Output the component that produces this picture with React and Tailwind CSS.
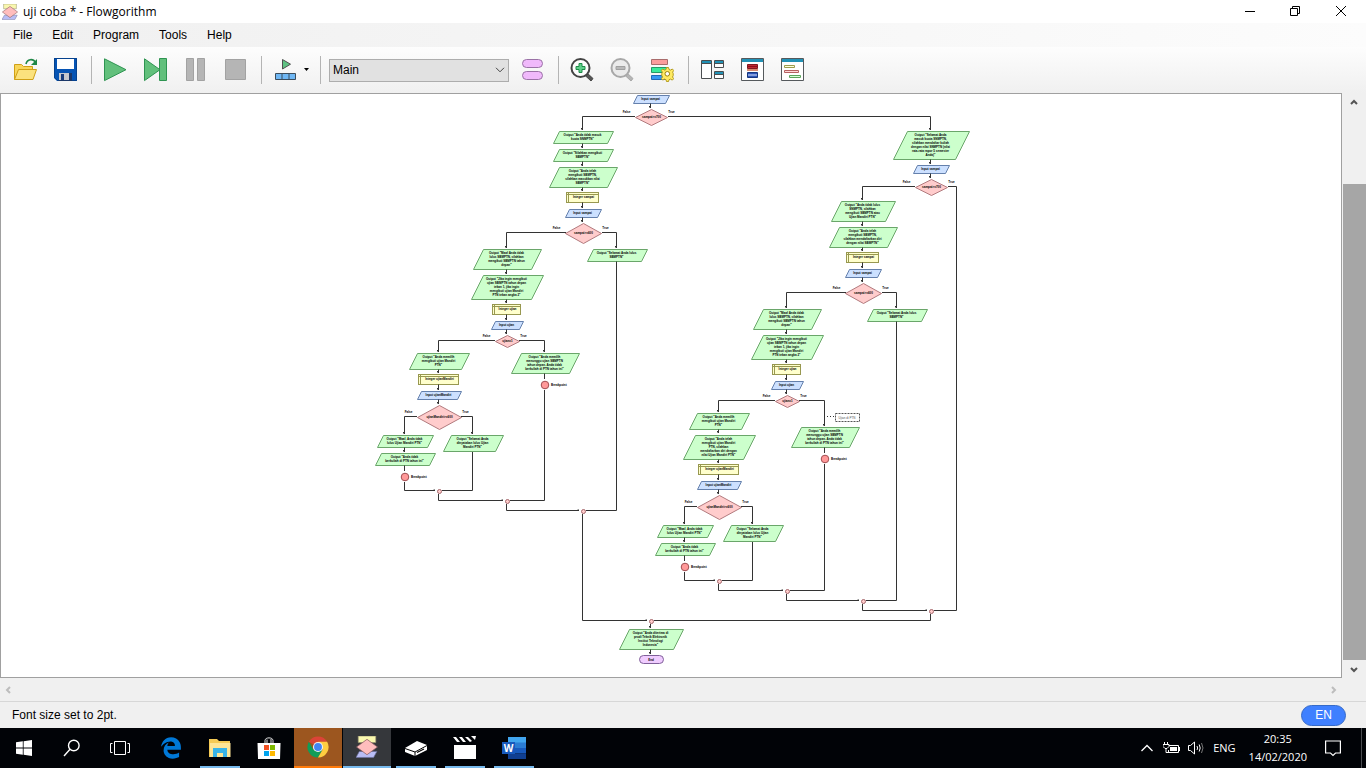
import React from "react";
import { FaEdgeLegacy } from "react-icons/fa";

/* ---------- Flowchart primitives ---------- */

const LINE = "#333333";

function Lines({ x, top, lines, fill = "#000000" }) {
  return (
    <text textAnchor="middle" fill={fill}>
      {lines.map((t, i) => (
        <tspan key={i} x={x} y={top + 4.5 + i * 4}>
          {t}
        </tspan>
      ))}
    </text>
  );
}

function Slanted({ x1, x2, y, h, lines, fill, stroke }) {
  const s = h / 2;
  return (
    <g>
      <polygon
        points={`${x1 + s},${y} ${x2},${y} ${x2 - s},${y + h} ${x1},${y + h}`}
        fill={fill}
        stroke={stroke}
      />
      <Lines x={(x1 + x2) / 2 - 1} top={y} lines={lines} />
    </g>
  );
}

const Output = ({ x1, x2, y, lines }) => (
  <Slanted x1={x1} x2={x2} y={y} h={lines.length * 4 + 4} lines={lines} fill="#ccffcc" stroke="#6aa66a" />
);

const Input = ({ x1, x2, y, name }) => (
  <Slanted x1={x1} x2={x2} y={y} h={8} lines={["Input " + name]} fill="#cce0ff" stroke="#6480ac" />
);

function Declare({ x, w, y, name }) {
  return (
    <g>
      <rect x={x} y={y} width={w} height="10" fill="#ffffcc" stroke="#989850" />
      <path d={`M${x + 2} ${y}v10M${x} ${y + 2}h${w}`} stroke="#989850" fill="none" />
      <Lines x={x + w / 2 + 1} top={y + 1} lines={["Integer " + name]} />
    </g>
  );
}

function Decision({ x, y, w, h, text }) {
  return (
    <g>
      <polygon points={`${x},${y - h} ${x + w},${y} ${x},${y + h} ${x - w},${y}`} fill="#ffcccc" stroke="#b27a7e" />
      <Lines x={x} top={y - 4} lines={[text]} />
      <text x={x - w - 9} y={y - 4.5} textAnchor="middle" fill="#000000">False</text>
      <text x={x + w + 4} y={y - 4.5} textAnchor="middle" fill="#000000">True</text>
    </g>
  );
}

function Wire({ d }) {
  return <path d={d} fill="none" stroke={LINE} />;
}

function Down({ x, y1, y2 }) {
  return (
    <g>
      <Wire d={`M${x} ${y1}V${y2}`} />
      <path d={`M${x - 1.5} ${y2 - 2}h2v1.5h-2z`} fill={LINE} />
    </g>
  );
}

function Join({ x, y }) {
  return (
    <g>
      <path d={`M${x - 6} ${y - 2}h1.500v1.500h-1.500z`} fill={LINE} />
      <circle cx={x} cy={y} r="2" fill="#ffcccc" stroke="#a5686c" />
    </g>
  );
}

function Breakpoint({ x, y }) {
  return (
    <g>
      <circle cx={x} cy={y} r="3.8" fill="#ff9999" stroke="#a04c50" />
      <text x={x + 6} y={y + 1} fill="#000000">Breakpoint</text>
    </g>
  );
}

/* Question about the independent entrance exam: the last nested decision. */
function IndependentExam() {
  return (
    <g>
      <Declare x={418.5} w={40} y={374.5} name="ujianMandiri" />
      <Down x={438.5} y1={384.5} y2={390} />
      <Input x1={417.5} x2={461.5} y={391.5} name="ujianMandiri" />
      <Down x={438.5} y1={399.5} y2={404} />
      <Decision x={439.5} y={417.5} w={22} h={12} text="ujianMandiri>=600" />
      <Wire d="M417 416.5H404.5V433M461 416.5H472.5V433" />
      <Down x={404.5} y1={430} y2={434} />
      <Down x={472.5} y1={430} y2={434} />
      <Output x1={377.5} x2={433.5} y={435.5} lines={['Output "Maaf, Anda tidak', 'lulus Ujian Mandiri PTN"']} />
      <Down x={404.5} y1={447.5} y2={452} />
      <Output x1={375.5} x2={435.5} y={453.5} lines={['Output "Anda tidak', 'berkuliah di PTN tahun ini"']} />
      <Wire d="M404.5 465.5V471M404.5 482V490.5H435M472.5 451.5V490.5H442" />
      <Output x1={443.5} x2={503.5} y={435.5} lines={['Output "Selamat Anda', "dinyatakan lulus Ujian", 'Mandiri PTN"']} />
      <Breakpoint x={405} y={477} />
      <Join x={439.5} y={491.5} />
      <Wire d="M438.5 494V500.5H503" />
    </g>
  );
}

/* Question about sitting another exam, shared by both halves of the chart. */
function ExamQuestion() {
  return (
    <g>
      <Wire d="M566 232.5H506.5V247M602 232.5H616.5V247" />
      <Down x={506.5} y1={244} y2={248} />
      <Down x={616.5} y1={244} y2={248} />
      <Output x1={473.5} x2={541.5} y={249.5} lines={['Output "Maaf Anda tidak', "lulus SBMPTN, silahkan", "mengikuti SBMPTN tahun", 'depan"']} />
      <Down x={506.5} y1={269.5} y2={274} />
      <Output x1={471.5} x2={543.5} y={275.5} lines={['Output "Jika ingin mengikuti', "ujian SBMPTN tahun depan", "tekan 1, jika ingin", "mengikuti ujian Mandiri", 'PTN tekan angka 2"']} />
      <Down x={506.5} y1={299.5} y2={303} />
      <Declare x={492.5} w={28} y={304.5} name="ujian" />
      <Down x={506.5} y1={314.5} y2={320} />
      <Input x1={491.5} x2={523.5} y={321.5} name="ujian" />
      <Down x={506.5} y1={329.5} y2={334} />
      <Decision x={507.5} y={341.5} w={12} h={6} text="ujian=1" />
      <Wire d="M495 340.5H438.5V351M519 340.5H544.5V351" />
      <Down x={438.5} y1={348} y2={352} />
      <Output x1={409.5} x2={469.5} y={353.5} lines={['Output "Anda memilih', "mengikuti ujian Mandiri", 'PTN"']} />
      <Down x={438.5} y1={369.5} y2={373} />
      <Output x1={587.5} x2={647.5} y={249.5} lines={['Output "Selamat Anda lulus', 'SBMPTN"']} />
    </g>
  );
}

const retake = ['Output "Anda memilih', "menunggu ujian SBMPTN", "tahun depan. Anda tidak", 'berkuliah di PTN tahun ini"'];

function Flowchart() {
  return (
    <svg
      viewBox="1 94 1340 583"
      className="block h-full w-full font-['Liberation_Sans',Arial,sans-serif] text-[3px] font-bold"
      role="img"
      aria-label="Flowchart"
    >
      <Input x1={633.5} x2={669.5} y={95.5} name="sampai" />
      <Down x={650.5} y1={103.5} y2={108} />
      <Decision x={651.5} y={117.5} w={16} h={8} text="sampai>=700" />
      <Wire d="M635 116.5H582.5V130M668 116.5H930.5V130" />
      <Down x={582.5} y1={126} y2={130} />
      <Down x={930.5} y1={126} y2={130} />

      <Output x1={553.5} x2={613.5} y={131.5} lines={['Output "Anda tidak masuk', 'kuota SNMPTN"']} />
      <Down x={582.5} y1={143.5} y2={148} />
      <Output x1={553.5} x2={613.5} y={149.5} lines={['Output "Silahkan mengikuti', 'SBMPTN"']} />
      <Down x={582.5} y1={161.5} y2={166} />
      <Output x1={549.5} x2={617.5} y={167.5} lines={['Output "Anda telah', "mengikuti SBMPTN,", "silahkan masukkan nilai", 'SBMPTN"']} />
      <Down x={582.5} y1={187.5} y2={191} />
      <Declare x={566.5} w={32} y={192.5} name="sampai" />
      <Down x={582.5} y1={202.5} y2={208} />
      <Input x1={565.5} x2={601.5} y={209.5} name="sampai" />
      <Down x={582.5} y1={217.5} y2={222} />
      <Decision x={583.5} y={233.5} w={18} h={10} text="sampai>=600" />
      <ExamQuestion />
      <IndependentExam />
      <Output x1={511.5} x2={579.5} y={353.5} lines={retake} />
      <Down x={544.5} y1={348} y2={352} />
      <Wire d="M544.5 373.5V379M544.5 390V500.5H510" />
      <Breakpoint x={545} y={385} />
      <Wire d="M506.5 504V510.5H579M616.5 261.5V510.5H586M582.5 514V620.5H647" />
      <Join x={507.5} y={501.5} />
      <Join x={583.5} y={511.5} />

      <Output
        x1={893.5}
        x2={969.5}
        y={131.5}
        lines={['Output "Selamat Anda', "masuk kuota SNMPTN,", "silahkan mendaftar kuliah", "dengan nilai SNMPTN (nilai", "rata-rata rapor 5 semester", 'Anda)"']}
      />
      <Down x={930.5} y1={159.5} y2={164} />
      <Input x1={913.5} x2={949.5} y={165.5} name="sampai" />
      <Down x={930.5} y1={173.5} y2={178} />
      <Decision x={931.5} y={187.5} w={16} h={8} text="sampai>=700" />
      <Wire d="M915 186.5H862.5V200M948 186.5H956.5V610.5H934" />
      <Down x={862.5} y1={196} y2={200} />
      <Output x1={831.5} x2={895.5} y={201.5} lines={['Output "Anda tidak lulus', "SNMPTN, silahkan", "mengikuti SBMPTN atau", 'Ujian Mandiri PTN"']} />
      <Down x={862.5} y1={221.5} y2={226} />
      <Output x1={829.5} x2={897.5} y={227.5} lines={['Output "Anda telah', "mengikuti SBMPTN,", "silahkan mendaftarkan diri", 'dengan nilai SBMPTN"']} />
      <Down x={862.5} y1={247.5} y2={251} />
      <Declare x={846.5} w={32} y={252.5} name="sampai" />
      <Down x={862.5} y1={262.5} y2={268} />
      <Input x1={845.5} x2={881.5} y={269.5} name="sampai" />
      <Down x={862.5} y1={277.5} y2={282} />
      <Decision x={863.5} y={293.5} w={18} h={10} text="sampai>=600" />
      <g transform="translate(280 60)">
        <ExamQuestion />
      </g>
      <Output x1={683.5} x2={755.5} y={435.5} lines={['Output "Anda telah', "mengikuti ujian Mandiri", "PTN, silahkan", "mendaftarkan diri dengan", 'nilai Ujian Mandiri PTN"']} />
      <Down x={718.5} y1={459.5} y2={463} />
      <g transform="translate(280 90)">
        <IndependentExam />
      </g>
      <path d="M827 416.5h8" stroke={LINE} strokeDasharray="1 2" />
      <rect x="835.5" y="413.5" width="24" height="8" fill="#ffffff" stroke="#555555" strokeDasharray="2 1" />
      <text x="847" y="418.5" textAnchor="middle" fill="#555555" className="font-normal">Ujian di PTN</text>
      <Down x={824.5} y1={409} y2={426} />
      <Output x1={791.5} x2={859.5} y={427.5} lines={retake} />
      <Wire d="M824.5 447.5V453M824.5 464V590.5H790" />
      <Breakpoint x={825} y={459} />
      <Wire d="M786.5 594V600.5H859M896.5 321.5V600.5H866M862.5 604V610.5H927M930.5 614V620.5H654" />
      <Join x={787.5} y={591.5} />
      <Join x={863.5} y={601.5} />
      <Join x={931.5} y={611.5} />

      <Join x={651.5} y={621.5} />
      <Down x={650.5} y1={624} y2={628} />
      <Output x1={619.5} x2={683.5} y={629.5} lines={['Output "Anda diterima di', "prodi Teknik Elektronik", "Institut Teknologi", 'Indonesia"']} />
      <Down x={650.5} y1={649.5} y2={654} />
      <rect x="639.5" y="655.5" width="24" height="8" rx="4" fill="#f0ccff" stroke="#80609a" />
      <text x="651" y="660.5" textAnchor="middle" fill="#000000">End</text>
    </svg>
  );
}

/* ---------- Icons ---------- */

function AppLogo({ className }) {
  return (
    <svg viewBox="0 0 20 20" className={className}>
      <path d="M2 0h16v6H2z" fill="#f9f7ae" stroke="#8f8b6a" strokeWidth=".6" />
      <path d="M3 14h16l-3 5.500H0z" fill="#b9bdf5" stroke="#6a6e9a" strokeWidth=".6" />
      <path d="M10 3L19.500 10 10 17 .5 10z" fill="#ffbdbd" stroke="#8b5f63" strokeWidth=".7" />
    </svg>
  );
}

const Icon = ({ children }) => (
  <svg viewBox="0 0 24 24" className="h-6 w-6 shrink-0" fill="none">
    {children}
  </svg>
);

const icons = {
  open: (
    <Icon>
      <path d="M1.500 21.500v-15h7l2 2h9v4" fill="#f8d65a" stroke="#d0a016" />
      <path d="M1.500 21.500l4-10h18l-3.500 10z" fill="#fbe27e" stroke="#d0a016" />
      <path d="M13 6c1-5 7-6 9.500-1.500" stroke="#208848" strokeWidth="1.600" />
      <path d="M24 1v6h-6z" fill="#208848" />
    </Icon>
  ),
  save: (
    <Icon>
      <path d="M1 0h23v23H4l-3-3z" fill="#0654b4" />
      <path d="M1.500.5h22v22H4.500l-3-3z" stroke="#06428e" />
      <path d="M4 1h17v10H4z" fill="#fff" />
      <path d="M6 15h13v8H6z" fill="#1b3768" />
      <path d="M6 15h10v7H6z" fill="#c6c9ce" />
      <path d="M8 16h3v6H8z" fill="#173c7c" />
    </Icon>
  ),
  play: (
    <Icon>
      <path d="M1.500.8v21.800L23 11.700z" fill="#62c07c" stroke="#2e9451" />
    </Icon>
  ),
  step: (
    <Icon>
      <path d="M1.500.8v21.800L17 11.700z" fill="#62c07c" stroke="#2e9451" />
      <path d="M16.500.5h7v22h-7z" fill="#62c07c" stroke="#2e9451" />
    </Icon>
  ),
  pause: (
    <Icon>
      <path d="M3.500.5h7v22h-7zM14.500.5h7v22h-7z" fill="#b5b5b5" stroke="#a2a2a2" />
    </Icon>
  ),
  stop: (
    <Icon>
      <path d="M2.500 1.500h20v20h-20z" fill="#b5b5b5" stroke="#a2a2a2" />
    </Icon>
  ),
  layout: (
    <Icon>
      <path d="M9.500 1.500v9.500l8-4.800z" fill="#5fc283" stroke="#505050" />
      <path d="M2.500 15.500h20v6h-20z" fill="#6fb7f4" stroke="#3c4d5c" />
      <path d="M9 15v7M16 15v7" stroke="#3c4d5c" />
    </Icon>
  ),
  functions: (
    <Icon>
      <rect x="2.500" y="1.500" width="20" height="8" rx="4" fill="#f0b9fb" stroke="#9a72a6" />
      <rect x="2.500" y="13.500" width="20" height="8" rx="4" fill="#f0b9fb" stroke="#9a72a6" />
    </Icon>
  ),
  zoomIn: (
    <Icon>
      <path d="M16 14l7 6.500-2 2.500-7.500-7z" fill="#555" stroke="#444" />
      <circle cx="10.500" cy="10" r="9" fill="#fdfdfd" stroke="#444" strokeWidth="2" />
      <path d="M9 5.500h3v3h3v3h-3v3H9v-3H6v-3h3z" fill="#5fd08a" stroke="#1e8a48" />
    </Icon>
  ),
  zoomOut: (
    <Icon>
      <path d="M16 14l7 6.500-2 2.500-7.500-7z" fill="#b5b5b5" stroke="#a8a8a8" />
      <circle cx="10.500" cy="10" r="9" fill="#ebebeb" stroke="#a8a8a8" strokeWidth="2" />
      <path d="M6 8.500h9v3H6z" fill="#b8b8b8" stroke="#a0a0a0" />
    </Icon>
  ),
  colors: (
    <Icon>
      <path d="M1.500 1.500h16v5h-16z" fill="#fb9c9c" stroke="#a96c6c" />
      <path d="M1.500 9.500h16v5h-16z" fill="#38eb9b" stroke="#279866" />
      <path d="M1.500 17.500h16v4h-16z" fill="#3498f2" stroke="#1f68b4" />
      <path
        d="M16.500 9.500h2l.5 2 1.500.6 1.800-1.100 1.400 1.400-1.100 1.800.6 1.300v2l-.7 1.500 1.200 1.700-1.400 1.400-1.800-1-1.500.6-.5 1.900h-2l-.5-1.900-1.500-.6-1.800 1-1.400-1.400 1.200-1.700-.7-1.500v-2l.6-1.300-1.100-1.800 1.400-1.400 1.800 1.100 1.500-.6z"
        fill="#ffea62"
        stroke="#b39a1c"
      />
      <circle cx="17.300" cy="15.800" r="2.300" fill="#fff" stroke="#9a8310" />
    </Icon>
  ),
  windows: (
    <Icon>
      <path d="M1.500 2.500h10v18h-10zM14.500 2.500h9v7h-9zM14.500 13.500h9v7h-9z" fill="#fff" stroke="#4a4e50" />
      <path d="M2 3h9v2H2zM15 3h8v2h-8zM15 14h8v2h-8z" fill="#2291b5" />
      <path d="M2 5.500h9M15 5.500h8M15 16.500h8" stroke="#4a4e50" />
    </Icon>
  ),
  source: (
    <Icon>
      <path d="M1.500.5h22v22h-22z" fill="#fff" stroke="#55595c" />
      <path d="M2 1h21v3H2z" fill="#2291b5" />
      <path d="M7.500 6.500h10v4h-10z" fill="#c02832" stroke="#801820" />
      <path d="M7 12h11" stroke="#d88c70" strokeWidth="2" />
      <path d="M7.500 14.500h10v5h-10z" fill="#2c55b8" stroke="#193880" />
      <path d="M8 17h9" stroke="#dce6ff" />
      <path d="M8 8.500h9" stroke="#8c1019" />
    </Icon>
  ),
  console: (
    <Icon>
      <path d="M1.500.5h22v22h-22z" fill="#fff" stroke="#55595c" />
      <path d="M2 1h21v3H2z" fill="#2291b5" />
      <path d="M4.500 7.500h10v2h-10z" fill="#ffffdc" stroke="#9c9c4c" />
      <path d="M4.500 12.500h14v2h-14z" fill="#ffd7d7" stroke="#b56060" />
      <path d="M9.500 17.500h11v2h-11z" fill="#d7ffd7" stroke="#5aa25a" />
    </Icon>
  ),
};

function Tool({ icon, label, disabled }) {
  return (
    <button type="button" aria-label={label} disabled={disabled} className="flex h-10 w-10 shrink-0 items-center justify-center">
      {icons[icon]}
    </button>
  );
}

const Separator = () => (
  <div className="flex h-7 w-[10px] shrink-0 justify-center pl-[3px]">
    <div className="w-px bg-[#b4b4b4]" />
  </div>
);

/* ---------- Window parts ---------- */

function TitleBar() {
  return (
    <header className="flex h-[23px] shrink-0 items-center bg-white pl-[2px] font-['Noto_Sans','Open_Sans',sans-serif] text-xs text-black">
      <AppLogo className="h-4 w-4" />
      <h1 className="ml-[5px] flex-1 font-['Open_Sans',sans-serif]">uji coba * - Flowgorithm</h1>
      <button type="button" aria-label="Minimize" className="flex w-[45px] justify-center">
        <svg viewBox="0 0 12 12" className="h-3 w-3"><path d="M1 5.500h10" stroke="#000" /></svg>
      </button>
      <button type="button" aria-label="Restore" className="flex w-[46px] justify-center">
        <svg viewBox="0 0 12 12" className="h-3 w-3" fill="none" stroke="#000"><path d="M1.500 2.500h7v7h-7zM3.500 2.500v-2h7v7h-2" /></svg>
      </button>
      <button type="button" aria-label="Close" className="flex w-[46px] justify-center">
        <svg viewBox="0 0 12 12" className="h-3 w-3" stroke="#000"><path d="M1 0l10 10M11 0L1 10" /></svg>
      </button>
      <div className="w-[2px]" />
    </header>
  );
}

function MenuBar() {
  return (
    <nav className="flex h-6 shrink-0 items-center bg-gradient-to-r from-[#f0f0f0] to-[#fcfcfc] pl-[3px]">
      {["File", "Edit", "Program", "Tools", "Help"].map((m) => (
        <button key={m} type="button" className="px-[10px]">
          {m}
        </button>
      ))}
    </nav>
  );
}

function ToolBar() {
  return (
    <div className="flex h-[46px] shrink-0 items-center bg-gradient-to-b from-[#fdfdfd] to-[#f0f0f0] pl-[5px]">
      <Tool icon="open" label="Open" />
      <Tool icon="save" label="Save" />
      <Separator />
      <Tool icon="play" label="Run" />
      <Tool icon="step" label="Step" />
      <Tool icon="pause" label="Pause" disabled />
      <Tool icon="stop" label="Stop" disabled />
      <Separator />
      <button type="button" aria-label="Window layout" className="flex h-10 w-[49px] shrink-0 items-center gap-[6px] pl-2">
        {icons.layout}
        <svg viewBox="0 0 7 4" className="h-1 w-[7px] shrink-0"><path d="M1 0h5L3.500 3z" fill="#000" /></svg>
      </button>
      <Separator />
      <div className="relative ml-[5px] mr-[3px] w-[180px] shrink-0">
        <select aria-label="Function" className="block h-[23px] w-full appearance-none border border-[#adadad] bg-[#e1e1e1] pl-[3px] text-black">
          <option>Main</option>
        </select>
        <svg viewBox="0 0 10 6" className="pointer-events-none absolute right-1 top-2 h-[6px] w-[10px]" fill="none" stroke="#444">
          <path d="M1 .8l4 4 4-4" />
        </svg>
      </div>
      <Tool icon="functions" label="Manage functions" />
      <Separator />
      <Tool icon="zoomIn" label="Zoom in" />
      <Tool icon="zoomOut" label="Zoom out" disabled />
      <Tool icon="colors" label="Chart style" />
      <Separator />
      <Tool icon="windows" label="Layout windows" />
      <Tool icon="source" label="Variable watch" />
      <Tool icon="console" label="Source code viewer" />
    </div>
  );
}

const Chevron = ({ d, color }) => (
  <svg viewBox="0 0 8 8" className="h-2 w-2" fill="none" stroke={color} strokeWidth="2">
    <path d={d} />
  </svg>
);

function Workspace() {
  return (
    <main className="flex min-h-0 flex-1">
      <div className="min-w-0 flex-1 overflow-hidden border border-[#a0a0a0] bg-white">
        <Flowchart />
      </div>
      <div className="flex w-6 shrink-0 flex-col items-stretch bg-[#f0f0f0]">
        <button type="button" aria-label="Scroll up" className="flex h-[18px] items-center justify-center">
          <Chevron d="M1 6l3-3 3 3" color="#555" />
        </button>
        <div className="flex flex-1 flex-col pt-[73px]">
          <div className="ml-px flex-1 bg-[#a6a6a6]" />
        </div>
        <button type="button" aria-label="Scroll down" className="flex h-[18px] items-center justify-center pt-[2px]">
          <Chevron d="M1 2l3 3 3-3" color="#555" />
        </button>
      </div>
    </main>
  );
}

function BottomBars() {
  return (
    <>
      <div className="flex h-6 shrink-0 items-center justify-between border-b border-[#d7d7d7] bg-[#f0f0f0] pl-1 pr-7">
        <button type="button" aria-label="Scroll left"><Chevron d="M6 1L3 4l3 3" color="#bdbdbd" /></button>
        <button type="button" aria-label="Scroll right"><Chevron d="M2 1l3 3-3 3" color="#bdbdbd" /></button>
      </div>
      <footer className="flex h-[26px] shrink-0 items-center justify-between bg-[#f0f0f0] pl-3 pr-5">
        <span>Font size set to 2pt.</span>
        <button type="button" className="h-[21px] w-[45px] rounded-full border border-[#356ac8] bg-[#3f80ff] text-white">
          EN
        </button>
      </footer>
    </>
  );
}

/* ---------- Taskbar ---------- */

const taskIcons = {
  start: (
    <svg viewBox="0 0 16 16" className="h-4 w-4" fill="#fff">
      <path d="M0 2.300l6.800-1v6.300H0zM7.600 1.200L16 0v7.600H7.600zM0 8.400h6.800v6.300l-6.800-1zM7.600 8.400H16V16l-8.400-1.200z" />
    </svg>
  ),
  search: (
    <svg viewBox="0 0 18 18" className="h-[18px] w-[18px]" fill="none" stroke="#fff" strokeWidth="1.400">
      <circle cx="10.800" cy="6.500" r="5.300" />
      <path d="M7 10.300L1 17" />
    </svg>
  ),
  taskView: (
    <svg viewBox="0 0 22 16" className="h-4 w-[22px]" fill="none" stroke="#fff">
      <path d="M5.500 1.500h11v13h-11zM3.500 3.500h-2v9h2M18.500 3.500h2v9h-2" />
    </svg>
  ),
  explorer: (
    <svg viewBox="0 0 22 20" className="h-5 w-[22px]">
      <path d="M0 1h8l2 2h11v16H0z" fill="#f4ca55" />
      <path d="M1 5h20.500v14H1z" fill="#fde596" />
      <path d="M4 19v-9h14v9h-4v-4H8v4z" fill="#38b4e8" />
    </svg>
  ),
  store: (
    <svg viewBox="0 0 24 24" className="h-6 w-6">
      <path d="M8 7V4.500C8 1 16 1 16 4.500V7M10 7V3.500M14 7V3" stroke="#e8e8e8" fill="none" />
      <path d="M.5 7h23l-.5 16H1z" fill="#fff" />
      <path d="M7 9h5v5H7z" fill="#f25022" />
      <path d="M13 9h5v5h-5z" fill="#7fba00" />
      <path d="M7 15h5v5H7z" fill="#00a4ef" />
      <path d="M13 15h5v5h-5z" fill="#ffb900" />
    </svg>
  ),
  chrome: (
    <svg viewBox="0 0 24 24" className="h-[22px] w-[22px]">
      <path d="M12 12L2.040 6.250A11.500 11.500 0 0 1 21.960 6.250H12z" fill="#db4437" />
      <path d="M2.040 6.250A11.500 11.500 0 0 0 12 23.500l4.980-8.620L12 12 7.020 14.880z" fill="#0f9d58" />
      <path d="M21.960 6.250A11.500 11.500 0 0 1 12 23.500l4.980-8.620L12 6.250z" fill="#ffcd40" />
      <circle cx="12" cy="12" r="5.500" fill="#f1f1f1" />
      <circle cx="12" cy="12" r="4.300" fill="#4285f4" />
    </svg>
  ),
  drive: (
    <svg viewBox="0 0 24 18" className="h-[18px] w-6">
      <path d="M1 9L13 2l10 4v5l-12 6L1 13z" fill="#fff" />
      <path d="M1 9.500l10 3.500 12-6.500M11 13v4" stroke="#000" fill="none" />
      <path d="M13 13.500l7-3.500" stroke="#000" strokeWidth="1.200" />
    </svg>
  ),
  movies: (
    <svg viewBox="0 0 24 24" className="h-6 w-6" fill="#fff">
      <path d="M1 9h22v14H1z" />
      <path d="M0 1h3l4 5H4zM6 1h3l4 5h-3zM12 1h3l4 4-2 1zM18 0h5l-1 4z" />
    </svg>
  ),
  word: (
    <svg viewBox="0 0 24 22" className="h-[22px] w-6">
      <path d="M6 0h18v6H6z" fill="#41a5ee" />
      <path d="M6 5.500h18V11H6z" fill="#2b7cd3" />
      <path d="M6 11h18v5.500H6z" fill="#185abd" />
      <path d="M6 16.500h18V22H6z" fill="#103f91" />
      <path d="M0 5h13v12H0z" fill="#185abd" />
      <text x="6.500" y="14.500" textAnchor="middle" fill="#fff" className="font-['Open_Sans',sans-serif] text-[10px] font-bold">W</text>
    </svg>
  ),
};

function Task({ label, children, running }) {
  return (
    <button type="button" aria-label={label} className="relative flex h-10 w-[49px] shrink-0 items-center justify-center pr-[2px]">
      {children}
      {running && <span className="absolute bottom-0 left-1 h-[2px] w-10 bg-[#76b9ed]" />}
    </button>
  );
}

function Taskbar() {
  return (
    <div className="flex h-10 shrink-0 items-center bg-[#010307] text-white">
      <button type="button" aria-label="Start" className="flex w-12 justify-center">{taskIcons.start}</button>
      <button type="button" aria-label="Search" className="flex w-12 justify-center">{taskIcons.search}</button>
      <button type="button" aria-label="Task view" className="flex w-[51px] justify-center pr-1">{taskIcons.taskView}</button>
      <Task label="Edge"><FaEdgeLegacy className="h-[22px] w-[22px] text-[#0078d7]" /></Task>
      <Task label="File Explorer" running>{taskIcons.explorer}</Task>
      <Task label="Store">{taskIcons.store}</Task>
      <button type="button" aria-label="Chrome" className="mr-px flex h-10 w-12 shrink-0 items-center justify-center border-b-2 border-[#ff7b0a] bg-[#9c561f]">
        {taskIcons.chrome}
      </button>
      <button type="button" aria-label="Flowgorithm" className="mr-px flex h-10 w-12 shrink-0 items-center justify-center border-b-2 border-[#76b9ed] bg-[#35373b]">
        <AppLogo className="h-[22px] w-[22px]" />
      </button>
      <Task label="Drive" running>{taskIcons.drive}</Task>
      <Task label="Movies" running>{taskIcons.movies}</Task>
      <Task label="Word" running>{taskIcons.word}</Task>

      <div className="ml-auto flex h-10 items-center font-['Open_Sans',sans-serif] text-[11px]">
        <button type="button" aria-label="Show hidden icons" className="mr-[10px]">
          <svg viewBox="0 0 12 8" className="h-2 w-3" fill="none" stroke="#fff" strokeWidth="1.300"><path d="M.5 7L6 1.500 11.500 7" /></svg>
        </button>
        <svg viewBox="0 0 17 12" className="mr-2 h-3 w-[17px]" fill="none" stroke="#fff">
          <path d="M6 3.500h9.500v7h-10V8" />
          <path d="M7 5h7v4H7zM16 5h1v4h-1z" fill="#fff" stroke="none" />
          <path d="M1.500 0v3M4.500 0v3M0 2.500h6v2l-2 2H2l-2-2zM3 6v4.500h3" />
        </svg>
        <svg viewBox="0 0 17 14" className="mr-2 h-[14px] w-[17px]" fill="none" stroke="#fff">
          <path d="M.5 4.500h2l4-3.500v12l-4-3.500h-2zM9 5q1.200 2 0 4M11.200 3.500q2 3.500 0 7" />
          <path d="M13.500 2q3 5 0 10" stroke="#777" />
        </svg>
        <span className="mr-[13px]">ENG</span>
        <div className="mr-[18px] text-center leading-[18px]">
          <div>20:35</div>
          <div>14/02/2020</div>
        </div>
        <button type="button" aria-label="Notifications" className="mr-5">
          <svg viewBox="0 0 16 17" className="h-[17px] w-4" fill="none" stroke="#fff" strokeWidth="1.200">
            <path d="M.6 1h14.800v12H10.500L8 15.500 5.500 13H.6z" />
          </svg>
        </button>
        <div className="mr-1 h-10 w-px bg-[#4a4c50]" />
      </div>
    </div>
  );
}

export default function App() {
  return (
    <div className="flex h-screen min-h-[400px] flex-col overflow-hidden bg-[#f0f0f0] font-['Liberation_Sans',Arial,sans-serif] text-xs text-black">
      <TitleBar />
      <MenuBar />
      <ToolBar />
      <Workspace />
      <BottomBars />
      <Taskbar />
    </div>
  );
}
